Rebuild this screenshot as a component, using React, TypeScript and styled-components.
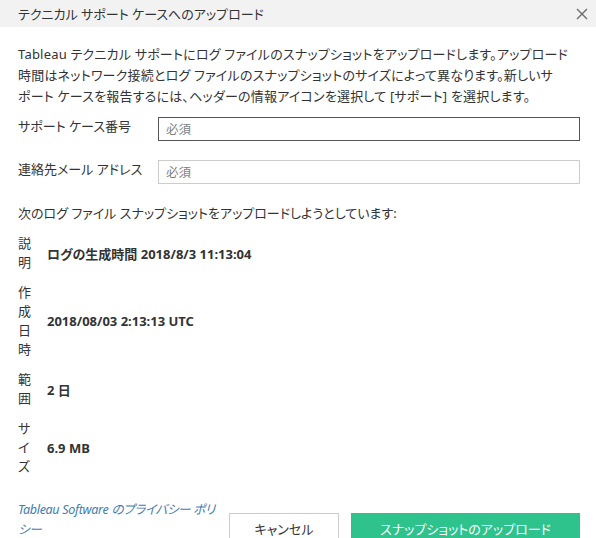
import React from 'react';
import styled, {createGlobalStyle} from 'styled-components';

const GlobalStyle = createGlobalStyle`
    * {
        box-sizing: border-box;
    }
    body {
        margin: 0;
        background: #ffffff;
        font-family: "Noto Sans", "Noto Sans CJK JP", sans-serif;
        color: #333333;
        font-size: 13px;
        font-feature-settings: "palt";
    }
`;

type DetailType = {
    label: string;
    value: string;
};

const details: DetailType[] = [
    {label: '説明', value: 'ログの生成時間 2018/8/3 11:13:04'},
    {label: '作成日時', value: '2018/08/03 2:13:13 UTC'},
    {label: '範囲', value: '2 日'},
    {label: 'サイズ', value: '6.9 MB'},
];

export default function App() {
    return (
        <>
            <GlobalStyle/>
            <Dialog>
                <Header>
                    <Title>テクニカル サポート ケースへのアップロード</Title>
                    <CloseButton aria-label="close">
                        <svg width="12" height="12" viewBox="0 0 12 12">
                            <path d="M1 1 L11 11 M11 1 L1 11" stroke="#6b6b6b" strokeWidth="1.4"/>
                        </svg>
                    </CloseButton>
                </Header>
                <Body>
                    <Intro>
                        Tableau テクニカル サポートにログ ファイルのスナップショットをアップロードします。アップロード<br/>
                        時間はネットワーク接続とログ ファイルのスナップショットのサイズによって異なります。新しいサ<br/>
                        ポート ケースを報告するには、ヘッダーの情報アイコンを選択して [サポート] を選択します。
                    </Intro>

                    <FormRow>
                        <FieldLabel>サポート ケース番号</FieldLabel>
                        <Input placeholder="必須" $focused/>
                    </FormRow>
                    <FormRow>
                        <FieldLabel>連絡先メール アドレス</FieldLabel>
                        <Input placeholder="必須"/>
                    </FormRow>

                    <Lead>次のログ ファイル スナップショットをアップロードしようとしています:</Lead>

                    <DetailList>
                        {details.map(d => (
                            <DetailRow key={d.label}>
                                <DetailLabel>{d.label}</DetailLabel>
                                <DetailValue>{d.value}</DetailValue>
                            </DetailRow>
                        ))}
                    </DetailList>

                    <Footer>
                        <PrivacyLink href="#">Tableau Software のプライバシー ポリ<br/>シー</PrivacyLink>
                        <Buttons>
                            <Button>キャンセル</Button>
                            <Button $primary>スナップショットのアップロード</Button>
                        </Buttons>
                    </Footer>
                </Body>
            </Dialog>
        </>
    );
}

const Dialog = styled.div`
    width: 596px;
    height: 538px;
    overflow: hidden;
    background: #ffffff;
`;

const Header = styled.div`
    height: 27px;
    background: #f2f2f2;
    display: flex;
    align-items: center;
    justify-content: space-between;
    padding: 0 7px 0 18px;
`;

const Title = styled.h1`
    margin: 0;
    font-size: 13px;
    font-weight: 400;
    color: #333333;
`;

const CloseButton = styled.button`
    border: none;
    background: transparent;
    padding: 0;
    width: 14px;
    height: 14px;
    display: flex;
    align-items: center;
    justify-content: center;
`;

const Body = styled.div`
    padding: 17px 16px 0 18px;
`;

const Intro = styled.p`
    margin: 0 0 10px;
    line-height: 21px;
    white-space: nowrap;
    letter-spacing: 0.2px;
`;

const FormRow = styled.div`
    display: flex;
    align-items: flex-start;
    margin-bottom: 19px;
`;

const FieldLabel = styled.label`
    width: 140px;
    line-height: 18px;
`;

const Input = styled.input<{ $focused?: boolean }>`
    flex: 1;
    height: 24px;
    border: 1px solid ${p => p.$focused ? '#555555' : '#cccccc'};
    border-radius: 0;
    padding: 0 7px;
    font: inherit;
    font-size: 12.5px;
    color: #333333;
    outline: none;
    &::placeholder {
        color: #7f7f7f;
    }
`;

const Lead = styled.p`
    margin: 0 0 11px;
    line-height: 20px;
`;

const DetailList = styled.div`
    display: flex;
    flex-direction: column;
    gap: 11px;
`;

const DetailRow = styled.div`
    display: flex;
    align-items: center;
    gap: 16px;
`;

const DetailLabel = styled.span`
    width: 13px;
    line-height: 19px;
    word-break: break-all;
`;

const DetailValue = styled.span`
    font-weight: 700;
    color: #333333;
`;

const Footer = styled.div`
    display: flex;
    align-items: flex-start;
    margin-top: 24px;
`;

const PrivacyLink = styled.a`
    width: 211px;
    line-height: 20px;
    white-space: nowrap;
    font-size: 12.5px;
    letter-spacing: -0.3px;
    font-style: italic;
    color: #3e7cb1;
    text-decoration: none;
`;

const Buttons = styled.div`
    display: flex;
    gap: 12px;
    margin-top: 13px;
`;

const Button = styled.button<{ $primary?: boolean }>`
    height: 30px;
    padding: 0;
    width: ${p => p.$primary ? '229px' : '110px'};
    font: inherit;
    font-size: 13px;
    border: 1px solid ${p => p.$primary ? '#2ec38c' : '#cccccc'};
    background: ${p => p.$primary ? '#2ec38c' : '#ffffff'};
    color: ${p => p.$primary ? '#ffffff' : '#333333'};
`;
